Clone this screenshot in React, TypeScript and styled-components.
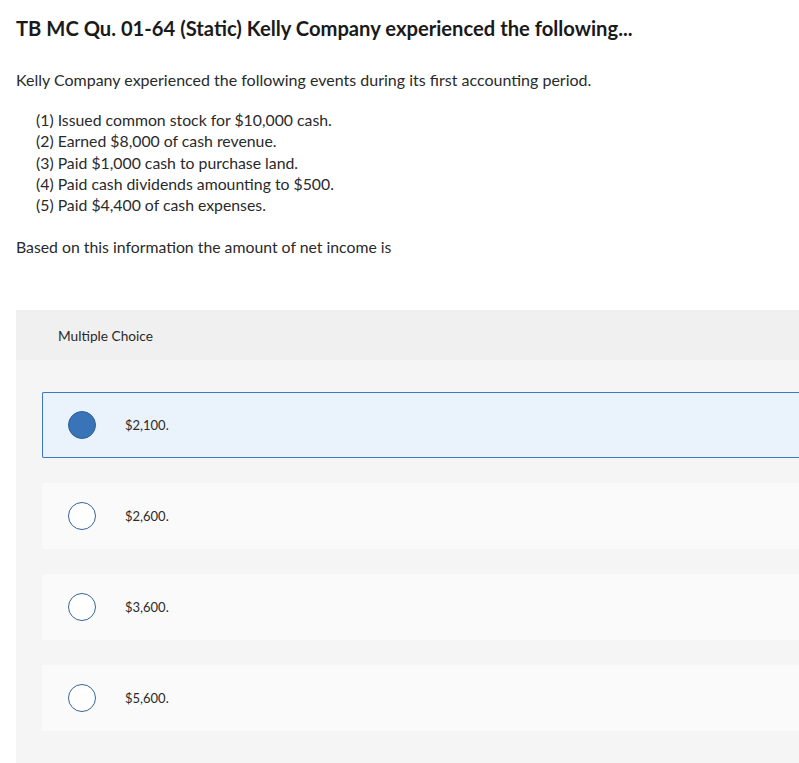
import React from "react";
import styled, { createGlobalStyle } from "styled-components";

const Global = createGlobalStyle`
  html, body { margin: 0; padding: 0; background: #ffffff; overflow: hidden; }
  body { font-family: Lato, "Open Sans", Arial, sans-serif; color: #1f1f1f; }
`;

const Page = styled.div`
  padding: 16px 0 0 16px;
`;

const Title = styled.h1`
  margin: 0;
  font-size: 20.2px;
  line-height: 24px;
  font-weight: 700;
  color: #1a1a1a;
`;

const Para = styled.p`
  margin: 30px 0 0 0;
  font-size: 16px;
  line-height: 20px;
  color: #2a2a2a;
`;

const List = styled.div`
  margin: 19px 0 0 20px;
  display: flex;
  flex-direction: column;
`;

const ListItem = styled.div`
  font-size: 15.8px;
  line-height: 21.25px;
  color: #2a2a2a;
`;

const Prompt = styled.p`
  margin: 22px 0 0 0;
  font-size: 15.8px;
  line-height: 20px;
  color: #2a2a2a;
`;

const Panel = styled.section`
  margin-top: 53px;
  background: #f5f5f5;
  min-height: 460px;
`;

const PanelHeader = styled.div`
  height: 50px;
  background: #f0f0f0;
  display: flex;
  align-items: center;
  padding-left: 42px;
  font-size: 13.7px;
  color: #2a2a2a;
`;

const Options = styled.div`
  display: flex;
  flex-direction: column;
  gap: 25px;
  padding: 32px 0 0 26px;
`;

const Option = styled.div<{ $selected?: boolean }>`
  height: 66px;
  box-sizing: border-box;
  display: flex;
  align-items: center;
  padding-left: 25px;
  border-radius: 2px 0 0 2px;
  background: ${(p) => (p.$selected ? "#eaf2fb" : "#fafafa")};
  border: 1px solid ${(p) => (p.$selected ? "#3b78c2" : "#fafafa")};
  border-right: none;
`;

const Radio = styled.span<{ $selected?: boolean }>`
  width: 28px;
  height: 28px;
  box-sizing: border-box;
  border-radius: 50%;
  flex: none;
  background: ${(p) => (p.$selected ? "#3a74b8" : "#ffffff")};
  border: ${(p) => (p.$selected ? "1px solid #2e5f98" : "1.5px solid #35659a")};
`;

const OptionText = styled.span`
  margin-left: 29px;
  font-size: 13px;
  color: #2a2a2a;
`;

const items = [
  "(1) Issued common stock for $10,000 cash.",
  "(2) Earned $8,000 of cash revenue.",
  "(3) Paid $1,000 cash to purchase land.",
  "(4) Paid cash dividends amounting to $500.",
  "(5) Paid $4,400 of cash expenses.",
];

const choices = ["$2,100.", "$2,600.", "$3,600.", "$5,600."];

export default function App() {
  return (
    <>
      <Global />
      <Page>
        <Title>TB MC Qu. 01-64 (Static) Kelly Company experienced the following...</Title>
        <Para>Kelly Company experienced the following events during its first accounting period.</Para>
        <List>
          {items.map((t) => (
            <ListItem key={t}>{t}</ListItem>
          ))}
        </List>
        <Prompt>Based on this information the amount of net income is</Prompt>
        <Panel>
          <PanelHeader>Multiple Choice</PanelHeader>
          <Options>
            {choices.map((c, i) => (
              <Option key={c} $selected={i === 0}>
                <Radio $selected={i === 0} />
                <OptionText>{c}</OptionText>
              </Option>
            ))}
          </Options>
        </Panel>
      </Page>
    </>
  );
}
